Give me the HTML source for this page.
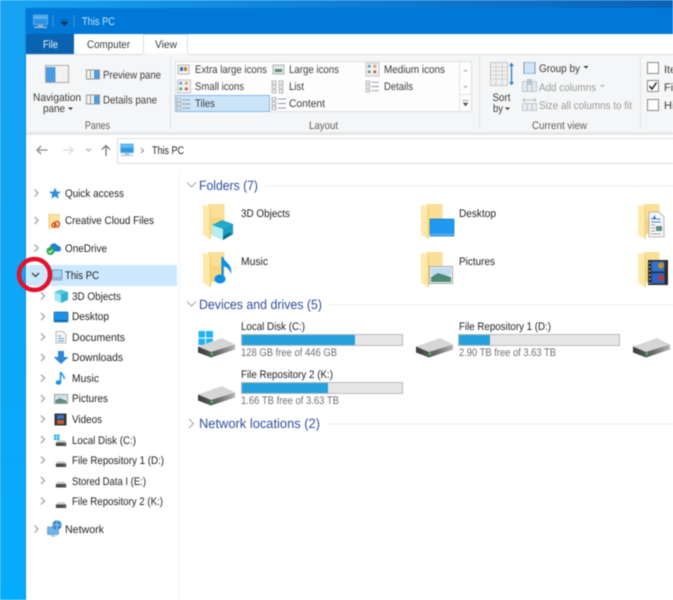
<!DOCTYPE html>
<html lang="en"><head><meta charset="utf-8"><title>This PC</title>
<style>
html,body{margin:0;padding:0;background:#fff;width:673px;height:600px;overflow:hidden}
svg{display:block;filter:blur(.4px)}
text{font-family:"Liberation Sans",sans-serif;font-size:11px;fill:#222}
.r text,text.r{fill:#3b3b3b}
text.g{fill:#9a9a9a}
text.h{font-size:13.5px;fill:#2f4f9f}
text.s{fill:#707070}
.c{fill:none;stroke:#a8a8a8;stroke-width:1.4}
</style></head><body>
<svg xmlns="http://www.w3.org/2000/svg" width="673" height="600" viewBox="0 0 673 600" text-rendering="geometricPrecision">
<defs>
<linearGradient id="top" x1="0" x2="1" y1="0" y2="0"><stop offset="0" stop-color="#18a4f2"/><stop offset=".5" stop-color="#0f80d8"/><stop offset="1" stop-color="#0b63b8"/></linearGradient>
<linearGradient id="left" x1="0" x2="0" y1="0" y2="1"><stop offset="0" stop-color="#16a2f0"/><stop offset="1" stop-color="#06acfd"/></linearGradient>
<linearGradient id="df" x1="0" x2="1" y1="0" y2="0"><stop offset="0" stop-color="#3c3c3c"/><stop offset=".55" stop-color="#6a6a6a"/><stop offset="1" stop-color="#b5b5b5"/></linearGradient>
<symbol id="folder" viewBox="0 0 22 35" overflow="visible">
<path d="M5 0H21.500V30H5Z" fill="#f6d680"/><path d="M5 0H21.500V14H5Z" fill="#fadf96"/>
<path d="M0 0.500L7.500 4V35L0 31Z" fill="#ffe9aa"/><path d="M6.500 3.500L8 4V35H6.500Z" fill="#f2d27c"/>
</symbol>
<symbol id="drive" viewBox="0 0 37 20" overflow="visible">
<path d="M0 8.500L24 0L37 6.500L13 14Z" fill="#d6d6d6"/>
<path d="M0 8.500L13 14L37 6.500V11.500L13 19.500L0 14.500Z" fill="url(#df)"/>
<rect x="12.500" y="14.500" width="2.500" height="2.500" fill="#35c26a"/>
</symbol>
<symbol id="mdrive" viewBox="0 0 12 7" overflow="visible">
<path d="M0 3L2 .5H10L12 3Z" fill="#c8c8c8"/><rect x="0" y="3" width="12" height="4" fill="#4a4a4a"/><rect x="9" y="4.500" width="1.500" height="1" fill="#4ec27a"/>
</symbol>
<symbol id="pc" viewBox="0 0 15 13" overflow="visible">
<rect x=".5" y="0" width="14" height="9.500" fill="#2f9ae4" stroke="#86c2ea" stroke-width=".8"/><rect x="1" y="1" width="13" height="3" fill="#6bbdf1"/><rect x="5" y="10" width="5" height="1.500" fill="#a5b9c7"/><rect x="1" y="11.500" width="13" height="1.500" fill="#b8c6d0"/>
</symbol>
<symbol id="gal" viewBox="0 0 14 14" overflow="visible">
<rect x="0" y="0" width="14" height="14" fill="#f2f2f2" stroke="#aaa" stroke-width=".7"/><rect x="2" y="2" width="3" height="3" fill="#5f9fd0"/><rect x="8" y="2" width="3" height="3" fill="#d0a060"/><rect x="2" y="8" width="3" height="3" fill="#60a870"/><rect x="8" y="8" width="3" height="3" fill="#c85a50"/>
</symbol>
<symbol id="lines" viewBox="0 0 14 13" overflow="visible">
<path d="M0 .5h4v3H0ZM0 5h4v3H0ZM0 9.500h4v3H0Z" fill="#f4f4f4" stroke="#999" stroke-width=".7"/><path d="M6 2h8M6 6.500h8M6 11h8" stroke="#8a9aa8" stroke-width="1"/>
</symbol>
</defs>

<!-- Desktop -->
<rect width="673" height="600" fill="url(#left)"/>
<rect width="673" height="8" fill="url(#top)"/>
<rect x="25" y="8" width="1" height="592" fill="#0c8edc"/>

<!-- Window -->
<rect x="26" y="8" width="647" height="592" fill="#fff"/>
<rect x="26" y="8" width="647" height="26" fill="#0078d7"/>
<use href="#pc" x="33" y="15" width="15" height="13" opacity=".85"/>
<path d="M53 15V27M74 15V27" stroke="#3c97e2" stroke-width="1"/>
<path d="M61.500 20h6M61 22h7l-3.500 3.500Z" fill="#14304a" stroke="#14304a" stroke-width=".6"/>
<text x="82" y="25" textLength="33" lengthAdjust="spacingAndGlyphs" style="fill:#c9e2f6">This PC</text>

<!-- Tabs -->
<rect x="26" y="34" width="48" height="20" fill="#0a63b0"/>
<text x="43" y="48" textLength="15" lengthAdjust="spacingAndGlyphs" style="fill:#e8f2fa">File</text>
<text x="87" y="48" textLength="43" lengthAdjust="spacingAndGlyphs" class="r">Computer</text>
<path d="M143.500 54V34.500H187.500V54" fill="#fff" stroke="#dcdcdc"/>
<text x="155" y="48" textLength="22" lengthAdjust="spacingAndGlyphs" class="r">View</text>

<!-- Ribbon -->
<rect x="26" y="54" width="647" height="78" fill="#f5f6f7"/>
<path d="M26 54.500H143M188 54.500H673" stroke="#dadbdc"/>
<rect x="143.500" y="53" width="44" height="2" fill="#f5f6f7"/>
<rect x="26" y="132" width="647" height="3" fill="#e6e7e8"/>
<path d="M170.500 57V129M479.500 57V129M640.500 57V129" stroke="#e2e3e4"/>

<!-- Panes group -->
<rect x="45.500" y="65.500" width="23" height="17" fill="#fafafa" stroke="#a9a9a9"/>
<rect x="46" y="67" width="9.500" height="15" fill="#4a9be4"/>
<rect x="56" y="67" width="12" height="15" fill="#f2f2f2"/>
<g class="r">
<text x="33" y="101" textLength="48" lengthAdjust="spacingAndGlyphs">Navigation</text>
<text x="43" y="112" textLength="22" lengthAdjust="spacingAndGlyphs">pane</text>
<path d="M68 107.500h5l-2.500 2.500Z" fill="#333"/>
<rect x="86.500" y="70" width="13" height="9" fill="#f5f5f5" stroke="#999"/><rect x="94" y="70.500" width="5" height="8" fill="#4a9be4"/><path d="M90.500 70v9" stroke="#999"/>
<text x="103" y="78.500" textLength="58" lengthAdjust="spacingAndGlyphs">Preview pane</text>
<rect x="86.500" y="95" width="13" height="9" fill="#f5f5f5" stroke="#999"/><rect x="94" y="95.500" width="5" height="8" fill="#4a9be4"/><path d="M90.500 95v9" stroke="#999"/>
<text x="103" y="103.500" textLength="54" lengthAdjust="spacingAndGlyphs">Details pane</text>
<text x="85" y="129" textLength="25" lengthAdjust="spacingAndGlyphs" style="fill:#5e5e5e">Panes</text>
</g>

<!-- Layout group -->
<rect x="175.500" y="61.500" width="296" height="50" fill="#fdfdfe" stroke="#dfe0e1"/>
<rect x="175.500" y="95.500" width="94" height="16" fill="#cce4f7" stroke="#88b9e6"/>
<path d="M459.500 62V111M459.500 94.500H472" stroke="#e2e3e4"/>
<path d="M463 71.500l2.500-2.500 2.500 2.500Z" fill="#bbb"/><path d="M463 86l2.500 2.500 2.500-2.500Z" fill="#bbb"/>
<path d="M462.500 100.500h6M463 103h5l-2.500 3Z" fill="#555" stroke="#555" stroke-width=".5"/>
<g>
<rect x="178" y="65" width="11" height="9" fill="#f4f4f4" stroke="#999" stroke-width=".7"/><rect x="180" y="67" width="3" height="4" fill="#3a70b0"/><rect x="184" y="67" width="3" height="4" fill="#c08030"/>
<use href="#gal" x="177.500" y="80" width="13" height="13"/>
<use href="#lines" x="177" y="98" width="13" height="12"/>
<rect x="273" y="65" width="11" height="9" fill="#dfe8ee" stroke="#999" stroke-width=".7"/><rect x="275" y="69" width="7" height="3" fill="#5a8f70"/>
<path d="M272 81h4v3h-4ZM272 85.500h4v3h-4ZM272 90h4v3h-4ZM279 81h4v3h-4ZM279 85.500h4v3h-4ZM279 90h4v3h-4Z" fill="#f6f6f6" stroke="#a0a0a0" stroke-width=".7"/>
<use href="#lines" x="272" y="97" width="14" height="13"/>
<use href="#gal" x="366" y="63" width="13" height="13"/>
<use href="#lines" x="366" y="80" width="13" height="13"/>
</g>
<g class="r">
<text x="195" y="73" textLength="72" lengthAdjust="spacingAndGlyphs">Extra large icons</text>
<text x="289" y="73" textLength="50" lengthAdjust="spacingAndGlyphs">Large icons</text>
<text x="384" y="73" textLength="61" lengthAdjust="spacingAndGlyphs">Medium icons</text>
<text x="195" y="90" textLength="49" lengthAdjust="spacingAndGlyphs">Small icons</text>
<text x="289" y="90" textLength="15" lengthAdjust="spacingAndGlyphs">List</text>
<text x="384" y="90" textLength="29" lengthAdjust="spacingAndGlyphs">Details</text>
<text x="195" y="107" textLength="20" lengthAdjust="spacingAndGlyphs">Tiles</text>
<text x="289" y="107" textLength="36" lengthAdjust="spacingAndGlyphs">Content</text>
<text x="309" y="129" textLength="29" lengthAdjust="spacingAndGlyphs" style="fill:#5e5e5e">Layout</text>
</g>

<!-- Current view -->
<rect x="490.500" y="62.500" width="17" height="23" fill="#f0f1ef" stroke="#c4c4c4"/>
<path d="M491 67h16M491 71h16M491 75h16M491 79h16M496 63v22M502 63v22" stroke="#c9c9c9" stroke-width=".8"/>
<path d="M511.500 64V84" stroke="#2f86c9" stroke-width="1.400"/><path d="M509 66l2.500-3.500 2.500 3.500ZM509 82l2.500 3.500 2.500-3.500Z" fill="#2f86c9"/>
<g class="r">
<text x="492.500" y="101" textLength="18" lengthAdjust="spacingAndGlyphs">Sort</text>
<text x="493" y="112" textLength="10" lengthAdjust="spacingAndGlyphs">by</text>
<path d="M505 107.500h5l-2.500 2.500Z" fill="#333"/>
<rect x="524" y="62.500" width="11" height="11" fill="#cfe6fa" stroke="#7db4e0" stroke-width=".8"/>
<path d="M524 62v12M535 62v12" stroke="#888" stroke-width=".8"/>
<text x="539" y="72" textLength="41" lengthAdjust="spacingAndGlyphs">Group by</text>
<path d="M583.500 66h5l-2.500 2.500Z" fill="#333"/>
</g>
<rect x="522.500" y="81.500" width="14" height="10" fill="#e5eaef" stroke="#b8c0c8" stroke-width=".8"/><path d="M527 81v11M532 81v11" stroke="#b8c0c8"/><rect x="527" y="79" width="5" height="6" fill="#b9c6d2"/>
<path d="M522.500 100h14M525 98.500l-2 1.500 2 1.500M534 98.500l2 1.500-2 1.500" fill="none" stroke="#a8b4c0" stroke-width=".8"/>
<rect x="522.500" y="103.500" width="14" height="7" fill="#e9edf1" stroke="#b8c0c8" stroke-width=".8"/><path d="M527 103v8M532 103v8" stroke="#b8c0c8"/>
<text class="g" x="539" y="91" textLength="57" lengthAdjust="spacingAndGlyphs">Add columns</text>
<path d="M600 85h5l-2.500 2.500Z" fill="#bbb"/>
<text class="g" x="539" y="109" textLength="93" lengthAdjust="spacingAndGlyphs">Size all columns to fit</text>
<text x="532" y="129" textLength="55" lengthAdjust="spacingAndGlyphs" style="fill:#5e5e5e">Current view</text>

<!-- Show/hide -->
<rect x="647.500" y="62.500" width="11" height="11" fill="#fff" stroke="#8a8a8a"/>
<rect x="647.500" y="80.500" width="11" height="11" fill="#fff" stroke="#8a8a8a"/>
<path d="M649.500 86l2.500 3 4.500-6.500" fill="none" stroke="#222" stroke-width="1.500"/>
<rect x="647.500" y="99.500" width="11" height="11" fill="#fff" stroke="#8a8a8a"/>
<text x="664" y="73" class="r">Ite</text>
<text x="664" y="91" class="r">Fi</text>
<text x="664" y="109" class="r">Hi</text>

<!-- Address bar -->
<path d="M41 146l-4 4 4 4" fill="none" stroke="#8a8a8a" stroke-width="1.300"/>
<path d="M47.500 150H38" stroke="#8a8a8a" stroke-width="1.300"/>
<path d="M63 150H72.500M69 146l4 4-4 4" fill="none" stroke="#d8d8d8" stroke-width="1.300"/>
<path d="M86 148.500l2.500 2.500 2.500-2.500" fill="none" stroke="#a8a8a8" stroke-width="1.100"/>
<path d="M106 156V145.500M102 149.500l4-4 4 4" fill="none" stroke="#777" stroke-width="1.300"/>
<path d="M117.500 163.500V138.500H673M117.500 163.500H673" fill="none" stroke="#dcdcdc"/>
<use href="#pc" x="120" y="143.500" width="14" height="13"/>
<path d="M141 148l2.500 2.500-2.500 2.500" fill="none" stroke="#8a8a8a" stroke-width="1"/>
<text x="152" y="154" textLength="32" lengthAdjust="spacingAndGlyphs">This PC</text>

<!-- Nav pane -->
<path d="M179.500 170V600" stroke="#f3f3f3"/>
<rect x="27" y="265" width="150" height="21" fill="#cce8ff"/>

<g class="c">
<path d="M34.500 189.500l3.500 3.500-3.500 3.500M34.500 217l3.500 3.500-3.500 3.500M34.500 244.500l3.500 3.500-3.500 3.500M34.500 525.500l3.500 3.500-3.500 3.500"/>
<path d="M41 292.500l3.500 3.500-3.500 3.500M41 313l3.500 3.500-3.500 3.500M41 333.500l3.500 3.500-3.500 3.500M41 354l3.500 3.500-3.500 3.500M41 374.500l3.500 3.500-3.500 3.500M41 395l3.500 3.500-3.500 3.500M41 415.500l3.500 3.500-3.500 3.500M41 436l3.500 3.500-3.500 3.500M41 456.500l3.500 3.500-3.500 3.500M41 477l3.500 3.500-3.500 3.500M41 497.500l3.500 3.500-3.500 3.500"/>
</g>
<path d="M32 273l3.500 3.500 3.500-3.500" fill="none" stroke="#4a4a4a" stroke-width="1.500"/>

<!-- Nav icons -->
<path d="M55 187.500l1.700 4 4.300.3-3.300 2.700 1.100 4.200-3.800-2.300-3.800 2.300 1.100-4.200-3.300-2.700 4.300-.3Z" fill="#2f8fdc"/>
<path d="M49 214.500H59V228H49Z" fill="#fbe39a" stroke="#e3c36c" stroke-width=".8"/>
<circle cx="57" cy="224" r="2.500" fill="none" stroke="#d93a2a" stroke-width="1.300"/><circle cx="54" cy="225" r="2" fill="none" stroke="#d93a2a" stroke-width="1.300"/>
<path d="M50 247a4 4 0 0 1 7.500-1.500a3.500 3.500 0 0 1 3.500 3.500a2.500 2.500 0 0 1-2 2.500H51Z" fill="#1f7fd0"/>
<circle cx="50.500" cy="251" r="4" fill="#2aa84a"/><path d="M48.500 251l1.500 1.500 2.500-2.500" fill="none" stroke="#fff" stroke-width="1"/>
<rect x="52" y="270" width="10" height="8" fill="#a5d2f0" stroke="#5a8fb8" stroke-width=".8"/><rect x="51.500" y="279" width="11" height="1.500" fill="#8fa8b8"/>

<path d="M61 289.500l7 2.500v8l-7 3l-6.500-3v-8Z" fill="#2fb0d6"/><path d="M54.500 292l6.500 2.500v8.500l-6.500-3Z" fill="#a6e6ef"/><path d="M54.500 292l6.500-2.500 7 2.500-7 2.500Z" fill="#5cc9e0"/>
<rect x="54" y="312" width="14" height="10" rx="1" fill="#1e8fe8" stroke="#1568a8" stroke-width=".7"/><path d="M55 320.500h12" stroke="#0d5a96"/>
<path d="M56 331.500h7l3 3v8.500H56Z" fill="#f4f6f8" stroke="#a8a8a8" stroke-width=".8"/><path d="M58 336h3M58 338.500h6M58 341h6" stroke="#5b9fd4" stroke-width=".9"/>
<path d="M58 351h6v6h4.500l-7.500 7-7.500-7H58Z" fill="#2f86d8"/>
<path d="M60.500 372v10.500" stroke="#1a8fe8" stroke-width="1.500"/><path d="M61 372c0 3 4 3.500 3 7" fill="none" stroke="#1a8fe8" stroke-width="1.500"/><ellipse cx="58.500" cy="382.500" rx="2.800" ry="2.300" fill="#1a8fe8"/>
<rect x="54.500" y="394.500" width="13" height="9" fill="#eef2f4" stroke="#9a9a9a"/><path d="M55.500 400l4-2 7 2.500v2.500h-11Z" fill="#5d8f80"/><rect x="55.500" y="395.500" width="11" height="2.500" fill="#c5dff2"/>
<rect x="54.500" y="413.500" width="12" height="12" fill="#333"/><rect x="57" y="415" width="7" height="4" fill="#2f72d0"/><rect x="57" y="420" width="7" height="4" fill="#c85a30"/>
<path d="M54 434.500h2.500v2.500H54ZM57 434.500h2.500v2.500H57ZM54 437.500h2.500v2.500H54ZM57 437.500h2.500v2.500H57Z" fill="#1fb0f0"/>
<use href="#mdrive" x="55" y="440" width="12" height="6"/>
<use href="#mdrive" x="55" y="461" width="12" height="6"/>
<use href="#mdrive" x="55" y="481.500" width="12" height="6"/>
<use href="#mdrive" x="55" y="502" width="12" height="6"/>
<rect x="47.500" y="527" width="11" height="7.500" fill="#6fb4ec" stroke="#4b8cc4" stroke-width=".6"/><path d="M51 536h4" stroke="#8aa" stroke-width="1"/><circle cx="57" cy="525" r="4.800" fill="#3d8fc8"/><path d="M52.500 525h9M57 520v10" stroke="#a6d3ef" stroke-width=".7"/>

<!-- Nav labels -->
<text x="65" y="197" textLength="59" lengthAdjust="spacingAndGlyphs">Quick access</text>
<text x="65" y="224" textLength="89" lengthAdjust="spacingAndGlyphs">Creative Cloud Files</text>
<text x="65" y="252" textLength="42" lengthAdjust="spacingAndGlyphs">OneDrive</text>
<text x="65" y="279" textLength="34" lengthAdjust="spacingAndGlyphs">This PC</text>
<text x="72" y="300" textLength="49" lengthAdjust="spacingAndGlyphs">3D Objects</text>
<text x="72" y="320" textLength="37" lengthAdjust="spacingAndGlyphs">Desktop</text>
<text x="72" y="341" textLength="53" lengthAdjust="spacingAndGlyphs">Documents</text>
<text x="72" y="361" textLength="51" lengthAdjust="spacingAndGlyphs">Downloads</text>
<text x="72" y="382" textLength="27" lengthAdjust="spacingAndGlyphs">Music</text>
<text x="72" y="402" textLength="36" lengthAdjust="spacingAndGlyphs">Pictures</text>
<text x="72" y="423" textLength="30" lengthAdjust="spacingAndGlyphs">Videos</text>
<text x="72" y="444" textLength="64" lengthAdjust="spacingAndGlyphs">Local Disk (C:)</text>
<text x="72" y="464" textLength="92" lengthAdjust="spacingAndGlyphs">File Repository 1 (D:)</text>
<text x="72" y="485" textLength="74" lengthAdjust="spacingAndGlyphs">Stored Data I (E:)</text>
<text x="72" y="505" textLength="91" lengthAdjust="spacingAndGlyphs">File Repository 2 (K:)</text>
<text x="65" y="533" textLength="39" lengthAdjust="spacingAndGlyphs">Network</text>

<!-- Red circle -->
<circle cx="34.500" cy="274.500" r="15.500" fill="none" stroke="#e4112b" stroke-width="4.500"/>

<!-- Section headers -->
<path d="M187 182.500l4.500 4.500 4.500-4.500M187 301.500l4.500 4.500 4.500-4.500" fill="none" stroke="#a8a8a8" stroke-width="1.100"/>
<path d="M189 419l4.500 4.500-4.500 4.500" fill="none" stroke="#a8a8a8" stroke-width="1.100"/>
<text class="h" x="199" y="190" textLength="59" lengthAdjust="spacingAndGlyphs">Folders (7)</text>
<text class="h" x="199" y="309" textLength="123" lengthAdjust="spacingAndGlyphs">Devices and drives (5)</text>
<text class="h" x="199" y="428" textLength="121" lengthAdjust="spacingAndGlyphs">Network locations (2)</text>
<path d="M265 186H673M329 305H673M327 424H673" stroke="#ececec"/>

<!-- Folders -->
<use href="#folder" x="203" y="204" width="22" height="35"/>
<use href="#folder" x="203" y="252" width="22" height="35"/>
<use href="#folder" x="421" y="204" width="22" height="35"/>
<use href="#folder" x="421" y="252" width="22" height="35"/>
<use href="#folder" x="638" y="204" width="22" height="35"/>
<use href="#folder" x="638" y="252" width="22" height="35"/>
<!-- overlays -->
<path d="M222 220l11 4v10l-10 6-11-5v-10Z" fill="#27a9c9"/><path d="M212 225l11 4v11l-11-5Z" fill="#b4eef2"/><path d="M223 229l10-5v10l-10 6Z" fill="#1b9cc0"/><path d="M223 240l10-6-4-1-6 3Z" fill="#0c6c8c"/>
<path d="M222.500 257v20" stroke="#0a8fe8" stroke-width="2.200"/><path d="M223 257c1 5 10 7 8 17c-1-3-3-7-8-8Z" fill="#0a8fe8"/><ellipse cx="220" cy="279" rx="5.500" ry="4.500" fill="#0a8fe8"/>
<rect x="430" y="219" width="24" height="17" fill="#1e9af0" stroke="#0f6fb8" stroke-width=".6"/><path d="M430 234.500h24" stroke="#7cc4f4"/>
<rect x="429.500" y="266.500" width="23" height="17" fill="#f1f1f1" stroke="#a8a8a8"/><rect x="431" y="268" width="20" height="7" fill="#bcdcf2"/><path d="M431 277l7-4 13 4v5h-20Z" fill="#4f8a78"/>
<path d="M649 212h10l5 5v20h-15Z" fill="#f5f6f7" stroke="#a6a6a6" stroke-width=".8"/><path d="M651 219h2l1.500-3 1 3h5M651 222h10" stroke="#3a90d8" stroke-width="1"/><path d="M651 225h4M651 228h4M651 231h4M651 234h10" stroke="#8a8a8a" stroke-width=".8"/><rect x="656" y="226" width="6" height="5" fill="#5b8f85"/>
<rect x="648" y="260" width="20" height="25" fill="#2c2c2c"/><rect x="651.500" y="261.500" width="13" height="10" fill="#2f72d0"/><rect x="651.500" y="273" width="13" height="10.500" fill="#2a62c8"/><circle cx="661" cy="265.500" r="3" fill="#c89030"/><circle cx="661" cy="278" r="3" fill="#b84030"/><path d="M649 263h1.500M649 267h1.500M649 271h1.500M649 275h1.500M649 279h1.500M649 283h1.500" stroke="#ddd"/>

<text x="241" y="217" textLength="49" lengthAdjust="spacingAndGlyphs">3D Objects</text>
<text x="241" y="265" textLength="27" lengthAdjust="spacingAndGlyphs">Music</text>
<text x="459" y="217" textLength="37" lengthAdjust="spacingAndGlyphs">Desktop</text>
<text x="459" y="265" textLength="36" lengthAdjust="spacingAndGlyphs">Pictures</text>

<!-- Drives -->
<path d="M198.500 331h6.500v6.500h-6.500ZM206 331h7v6.500h-7ZM198.500 338.500h6.500v6.500h-6.500ZM206 338.500h7v6.500h-7Z" fill="#1fb2f2"/>
<use href="#drive" x="198" y="338" width="37" height="20"/>
<use href="#drive" x="198" y="386" width="37" height="20"/>
<use href="#drive" x="416" y="338" width="37" height="20"/>
<use href="#drive" x="633" y="338" width="37" height="20"/>

<text x="241" y="330" textLength="64" lengthAdjust="spacingAndGlyphs">Local Disk (C:)</text>
<rect x="241.500" y="334.500" width="161" height="11" fill="#e6e6e6" stroke="#bcbcbc"/><rect x="242" y="335" width="113" height="10" fill="#26a0da"/>
<text class="s" x="241" y="356" textLength="96" lengthAdjust="spacingAndGlyphs">128 GB free of 446 GB</text>

<text x="241" y="378" textLength="92" lengthAdjust="spacingAndGlyphs">File Repository 2 (K:)</text>
<rect x="241.500" y="382.500" width="161" height="11" fill="#e6e6e6" stroke="#bcbcbc"/><rect x="242" y="383" width="86" height="10" fill="#26a0da"/>
<text class="s" x="241" y="404" textLength="98" lengthAdjust="spacingAndGlyphs">1.66 TB free of 3.63 TB</text>

<text x="459" y="330" textLength="92" lengthAdjust="spacingAndGlyphs">File Repository 1 (D:)</text>
<rect x="458.500" y="334.500" width="161" height="11" fill="#e6e6e6" stroke="#bcbcbc"/><rect x="459" y="335" width="31" height="10" fill="#26a0da"/>
<text class="s" x="459" y="356" textLength="97" lengthAdjust="spacingAndGlyphs">2.90 TB free of 3.63 TB</text>
</svg>
</body></html>
